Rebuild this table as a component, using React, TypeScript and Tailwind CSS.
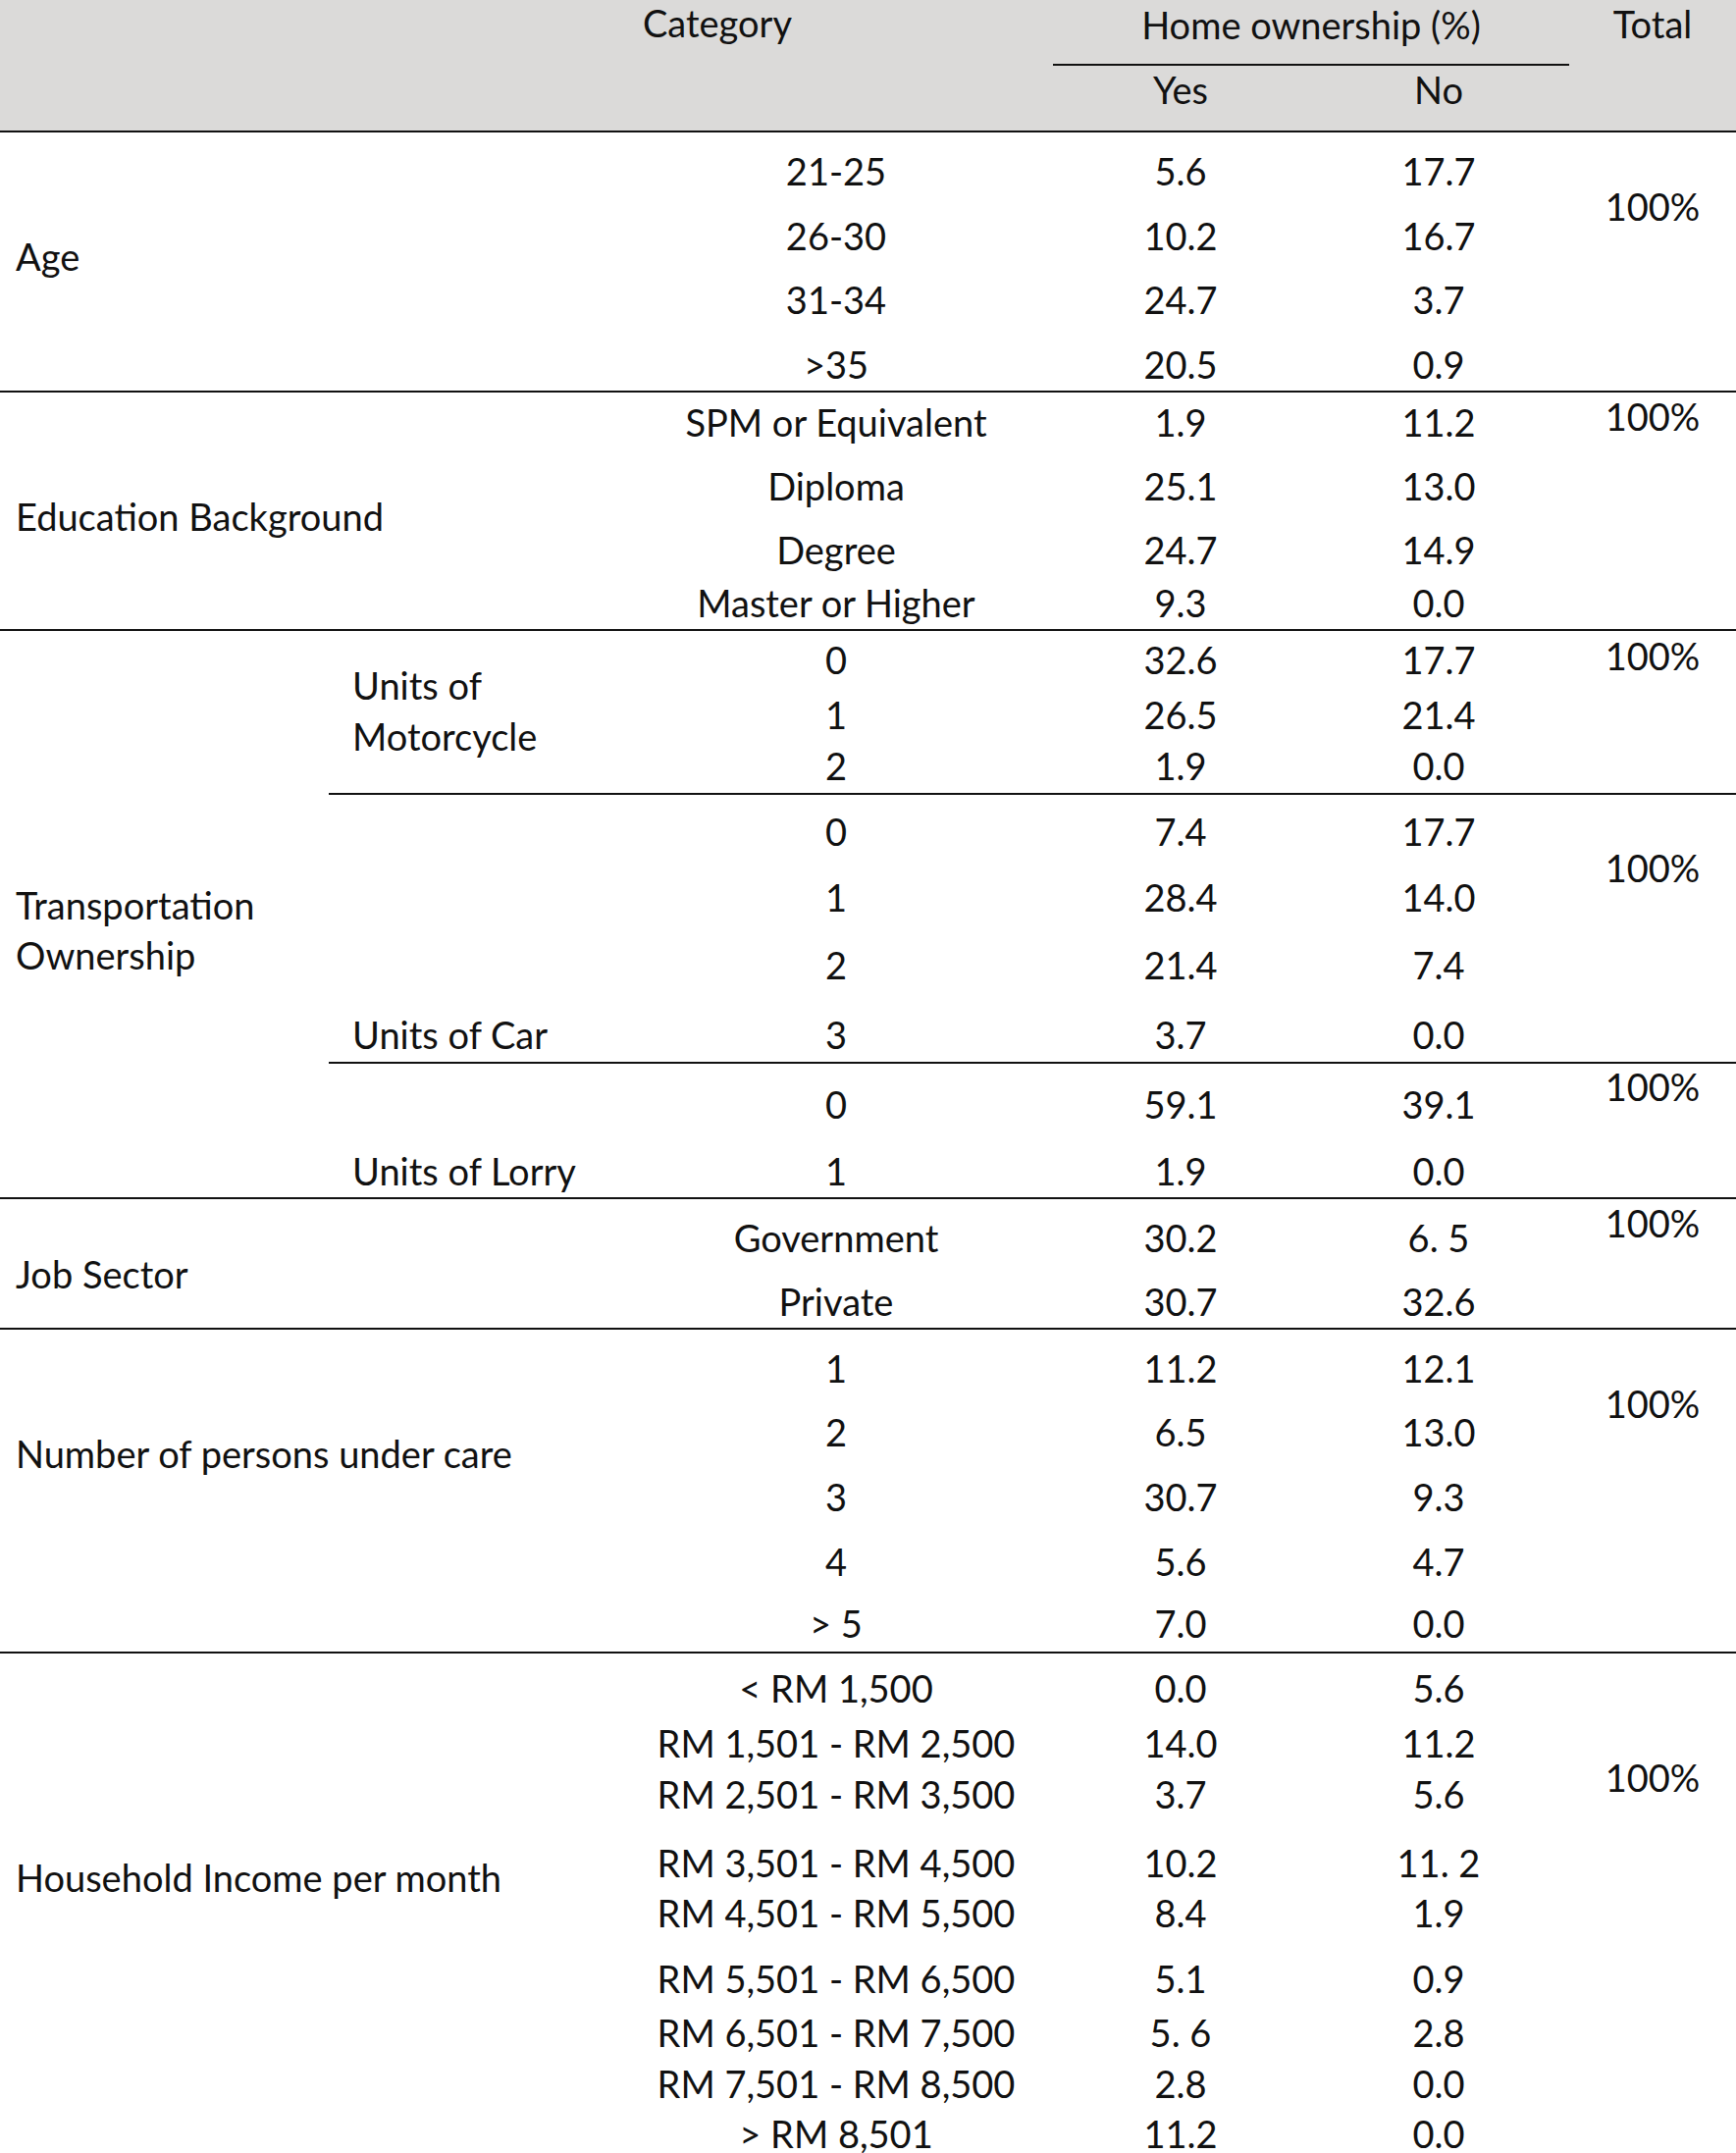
type Row = { cat: string; yes: string; no: string; h: string };

type Block = {
  sub?: string;
  subPt?: string;
  rowsPt: string;
  rows: Row[];
  totalPt: string;
  h: string;
  border?: boolean;
};

type Section = {
  label: string;
  labelPt: string;
  h?: string;
  blocks: Block[];
};

const sections: Section[] = [
  {
    label: "Age",
    labelPt: "pt-[106px]",
    h: "h-[265px]",
    blocks: [
      {
        rowsPt: "pt-[19px]",
        totalPt: "pt-[55px]",
        h: "h-full",
        rows: [
          { cat: "21-25", yes: "5.6", no: "17.7", h: "h-[66px]" },
          { cat: "26-30", yes: "10.2", no: "16.7", h: "h-[65px]" },
          { cat: "31-34", yes: "24.7", no: "3.7", h: "h-[66px]" },
          { cat: ">35", yes: "20.5", no: "0.9", h: "h-[40px]" },
        ],
      },
    ],
  },
  {
    label: "Education Background",
    labelPt: "pt-[106px]",
    h: "h-[243px]",
    blocks: [
      {
        rowsPt: "pt-[10px]",
        totalPt: "pt-[4px]",
        h: "h-full",
        rows: [
          { cat: "SPM or Equivalent", yes: "1.9", no: "11.2", h: "h-[65px]" },
          { cat: "Diploma", yes: "25.1", no: "13.0", h: "h-[65px]" },
          { cat: "Degree", yes: "24.7", no: "14.9", h: "h-[54px]" },
          { cat: "Master or Higher", yes: "9.3", no: "0.0", h: "h-[40px]" },
        ],
      },
    ],
  },
  {
    label: "Transportation Ownership",
    labelPt: "pt-[254px]",
    h: "h-[579px]",
    blocks: [
      {
        sub: "Units of Motorcycle",
        subPt: "pt-[29px]",
        rowsPt: "pt-[9px]",
        totalPt: "pt-[5px]",
        h: "h-[167px]",
        border: true,
        rows: [
          { cat: "0", yes: "32.6", no: "17.7", h: "h-[56px]" },
          { cat: "1", yes: "26.5", no: "21.4", h: "h-[52px]" },
          { cat: "2", yes: "1.9", no: "0.0", h: "h-[40px]" },
        ],
      },
      {
        sub: "Units of Car",
        subPt: "pt-[218px]",
        rowsPt: "pt-[17px]",
        totalPt: "pt-[54px]",
        h: "h-[274px]",
        border: true,
        rows: [
          { cat: "0", yes: "7.4", no: "17.7", h: "h-[67px]" },
          { cat: "1", yes: "28.4", no: "14.0", h: "h-[69px]" },
          { cat: "2", yes: "21.4", no: "7.4", h: "h-[71px]" },
          { cat: "3", yes: "3.7", no: "0.0", h: "h-[40px]" },
        ],
      },
      {
        sub: "Units of Lorry",
        subPt: "pt-[83px]",
        rowsPt: "pt-[21px]",
        totalPt: "pt-[3px]",
        h: "h-[136px]",
        rows: [
          { cat: "0", yes: "59.1", no: "39.1", h: "h-[68px]" },
          { cat: "1", yes: "1.9", no: "0.0", h: "h-[40px]" },
        ],
      },
    ],
  },
  {
    label: "Job Sector",
    labelPt: "pt-[56px]",
    h: "h-[133px]",
    blocks: [
      {
        rowsPt: "pt-[19px]",
        totalPt: "pt-[4px]",
        h: "h-full",
        rows: [
          { cat: "Government", yes: "30.2", no: "6. 5", h: "h-[65px]" },
          { cat: "Private", yes: "30.7", no: "32.6", h: "h-[40px]" },
        ],
      },
    ],
  },
  {
    label: "Number of persons under care",
    labelPt: "pt-[106px]",
    h: "h-[330px]",
    blocks: [
      {
        rowsPt: "pt-[19px]",
        totalPt: "pt-[55px]",
        h: "h-full",
        rows: [
          { cat: "1", yes: "11.2", no: "12.1", h: "h-[65px]" },
          { cat: "2", yes: "6.5", no: "13.0", h: "h-[66px]" },
          { cat: "3", yes: "30.7", no: "9.3", h: "h-[66px]" },
          { cat: "4", yes: "5.6", no: "4.7", h: "h-[63px]" },
          { cat: "> 5", yes: "7.0", no: "0.0", h: "h-[40px]" },
        ],
      },
    ],
  },
  {
    label: "Household Income per month",
    labelPt: "pt-[208px]",
    blocks: [
      {
        rowsPt: "pt-[15px]",
        totalPt: "pt-[106px]",
        h: "h-auto",
        rows: [
          { cat: "< RM 1,500", yes: "0.0", no: "5.6", h: "h-[56px]" },
          { cat: "RM 1,501 - RM 2,500", yes: "14.0", no: "11.2", h: "h-[52px]" },
          { cat: "RM 2,501 - RM 3,500", yes: "3.7", no: "5.6", h: "h-[70px]" },
          { cat: "RM 3,501 - RM 4,500", yes: "10.2", no: "11. 2", h: "h-[51px]" },
          { cat: "RM 4,501 - RM 5,500", yes: "8.4", no: "1.9", h: "h-[67px]" },
          { cat: "RM 5,501 - RM 6,500", yes: "5.1", no: "0.9", h: "h-[55px]" },
          { cat: "RM 6,501 - RM 7,500", yes: "5. 6", no: "2.8", h: "h-[52px]" },
          { cat: "RM 7,501 - RM 8,500", yes: "2.8", no: "0.0", h: "h-[51px]" },
          { cat: "> RM 8,501", yes: "11.2", no: "0.0", h: "h-[40px]" },
        ],
      },
    ],
  },
];

function BlockRows({ block }: { block: Block }) {
  return (
    <div
      className={`flex ${block.h} ${block.border ? "border-b-2 border-[#111]" : ""}`}
    >
      <div className={`w-[296px] shrink-0 pl-6 pr-2 leading-[52px] ${block.subPt ?? ""}`}>
        {block.sub}
      </div>
      <div className={`w-[968px] shrink-0 ${block.rowsPt}`}>
        {block.rows.map((r, i) => (
          <div key={i} className={`flex ${r.h}`}>
            <div className="w-[442px] text-center whitespace-nowrap">{r.cat}</div>
            <div className="w-[260px] text-center whitespace-pre">{r.yes}</div>
            <div className="w-[266px] text-center whitespace-pre">{r.no}</div>
          </div>
        ))}
      </div>
      <div className={`w-[170px] shrink-0 text-center ${block.totalPt}`}>100%</div>
    </div>
  );
}

export default function App() {
  return (
    <div className="w-[1769px] h-[2194px] overflow-hidden bg-white text-[#111] font-['Lato',sans-serif] text-[38px] leading-[40px]">
      {/* header */}
      <div className="flex h-[135px] bg-[#dbdad9] border-b-2 border-[#111]">
        <div className="w-[1073px] shrink-0 pl-[389px] pt-[3px] text-center">Category</div>
        <div className="w-[526px] shrink-0">
          <div className="h-[67px] pt-[5px] text-center border-b-2 border-[#111]">
            Home ownership (%)
          </div>
          <div className="flex mt-[4px]">
            <div className="w-[260px] text-center">Yes</div>
            <div className="w-[266px] text-center">No</div>
          </div>
        </div>
        <div className="w-[170px] shrink-0 pt-[4px] text-center">Total</div>
      </div>

      {sections.map((s) => (
        <div
          key={s.label}
          className={`flex border-b-2 border-[#111] ${s.h ?? ""}`}
        >
          <div
            className={`w-[335px] shrink-0 pl-4 pr-2 ${
              s.label === "Transportation Ownership" ? "leading-[51px]" : ""
            } ${s.labelPt}`}
          >
            {s.label === "Transportation Ownership" ? (
              <>
                Transportation
                <br />
                Ownership
              </>
            ) : (
              <span className="whitespace-nowrap">{s.label}</span>
            )}
          </div>
          <div className="flex-1">
            {s.blocks.map((b, i) => (
              <BlockRows key={i} block={b} />
            ))}
          </div>
        </div>
      ))}
    </div>
  );
}
